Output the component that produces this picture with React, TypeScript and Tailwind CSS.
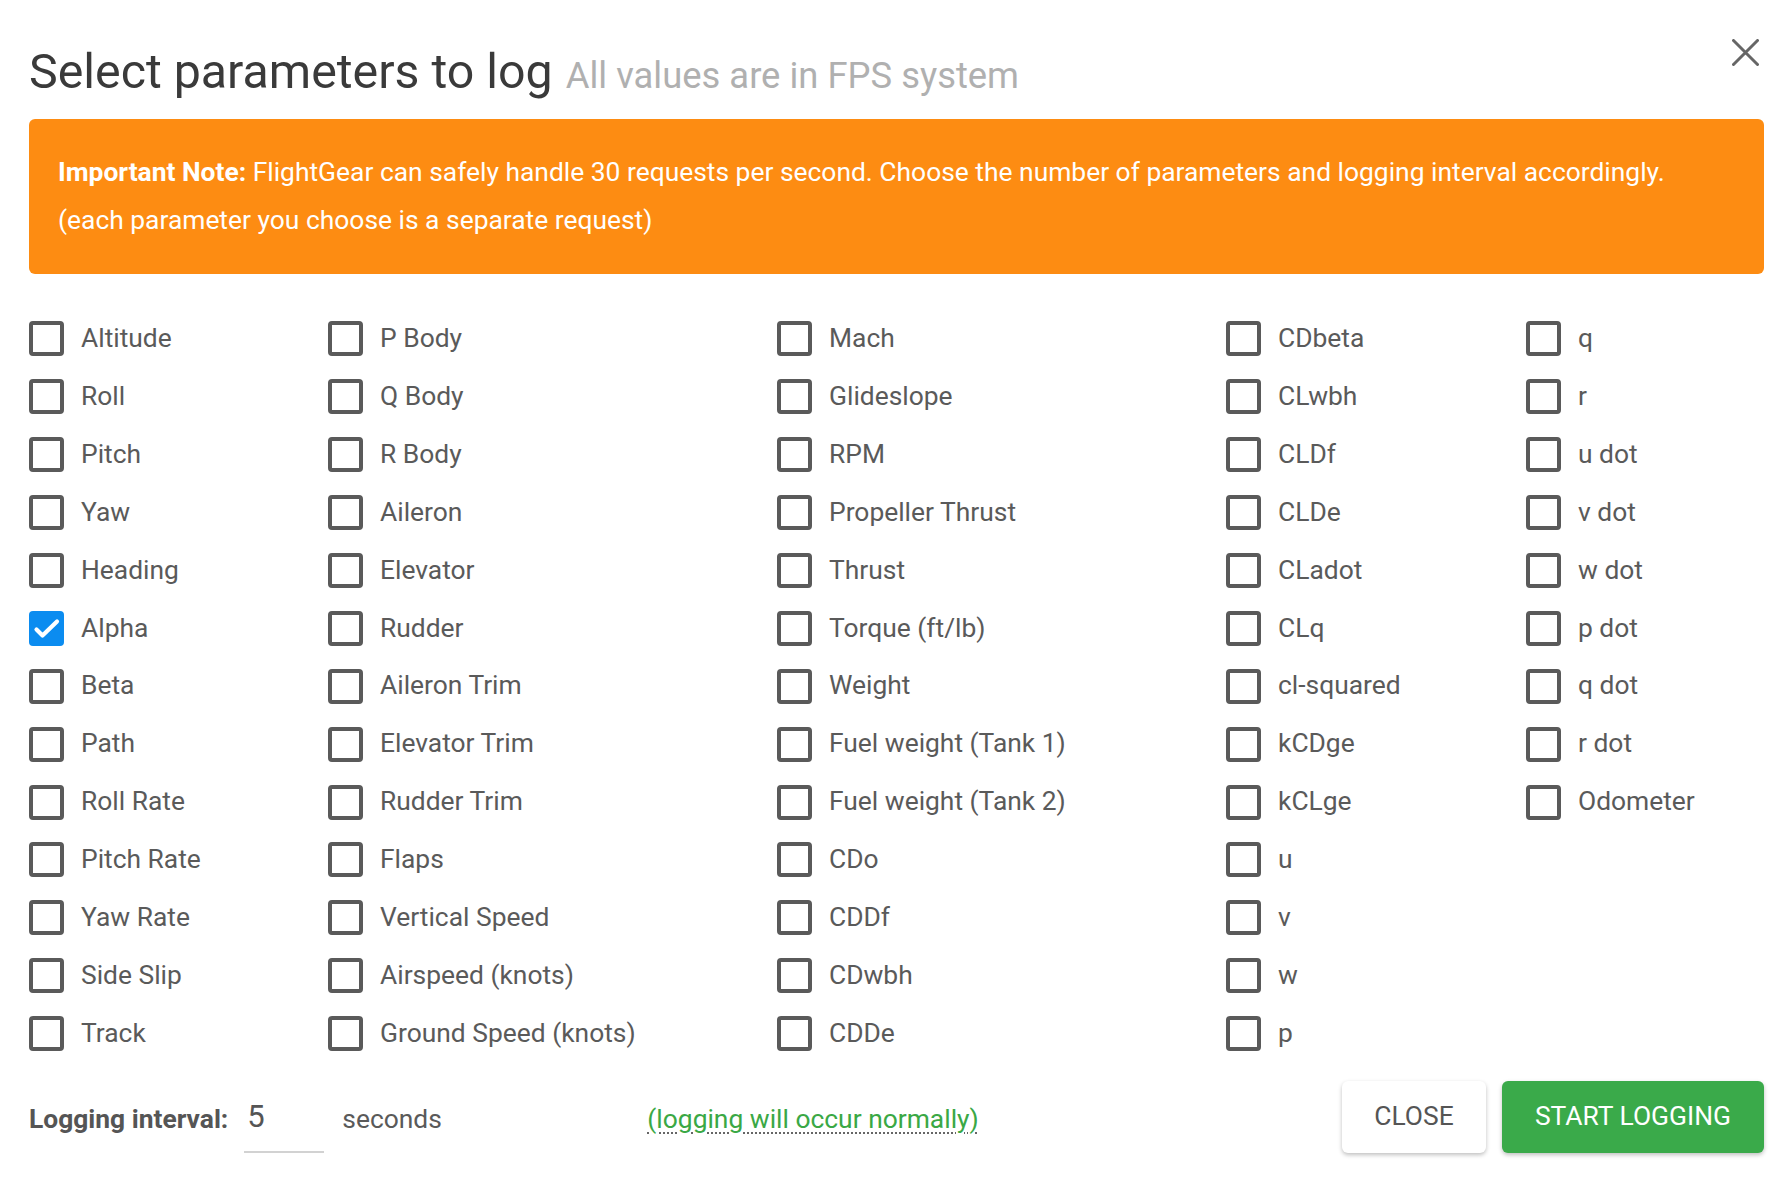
import React from "react";

const columns: string[][] = [
  ["Altitude", "Roll", "Pitch", "Yaw", "Heading", "Alpha", "Beta", "Path", "Roll Rate", "Pitch Rate", "Yaw Rate", "Side Slip", "Track"],
  ["P Body", "Q Body", "R Body", "Aileron", "Elevator", "Rudder", "Aileron Trim", "Elevator Trim", "Rudder Trim", "Flaps", "Vertical Speed", "Airspeed (knots)", "Ground Speed (knots)"],
  ["Mach", "Glideslope", "RPM", "Propeller Thrust", "Thrust", "Torque (ft/lb)", "Weight", "Fuel weight (Tank 1)", "Fuel weight (Tank 2)", "CDo", "CDDf", "CDwbh", "CDDe"],
  ["CDbeta", "CLwbh", "CLDf", "CLDe", "CLadot", "CLq", "cl-squared", "kCDge", "kCLge", "u", "v", "w", "p"],
  ["q", "r", "u dot", "v dot", "w dot", "p dot", "q dot", "r dot", "Odometer"],
];

function Checkbox({ checked }: { checked: boolean }) {
  if (checked) {
    return (
      <div className="w-[35px] h-[35px] rounded-[4px] bg-[#0b8cf0] flex items-center justify-center shrink-0">
        <svg width="35" height="35" viewBox="0 0 35 35">
          <path d="M7.5 18.5 L13.5 24.5 L28 10.5" fill="none" stroke="#ffffff" strokeWidth="4.2" strokeLinecap="round" strokeLinejoin="round" />
        </svg>
      </div>
    );
  }
  return <div className="w-[35px] h-[35px] rounded-[4px] border-[4px] border-[#5a5a5a] bg-white shrink-0" />;
}

export default function App() {
  return (
    <div
      className="relative w-[1792px] h-[1180px] bg-white pl-[29px] pr-[28px]"
      style={{ fontFamily: "Roboto, 'Liberation Sans', Arial, sans-serif" }}
    >
      <button className="absolute top-[39px] right-[33px] w-[27px] h-[27px]" aria-label="close">
        <svg width="27" height="27" viewBox="0 0 27 27">
          <path d="M1.5 1.5 L25.5 25.5 M25.5 1.5 L1.5 25.5" stroke="#666666" strokeWidth="3" strokeLinecap="round" />
        </svg>
      </button>

      <div className="pt-[44px] flex items-baseline leading-[56px]">
        <span className="text-[48.3px] text-[#3a3a3a]">Select parameters to log</span>
        <span className="text-[36.4px] text-[#b0b0b0] ml-[13px]">All values are in FPS system</span>
      </div>

      <div className="mt-[15px] bg-[#fd8c12] rounded-[6px] px-[29px] pt-[29px] pb-[30px] text-white text-[26.4px] leading-[48px]">
        <span className="font-bold">Important Note:</span> FlightGear can safely handle 30 requests per second. Choose the number of parameters and logging interval accordingly.
        <br />
        (each parameter you choose is a separate request)
      </div>

      <div className="mt-[36px] grid grid-cols-[299px_449px_449px_300px_1fr]">
        {columns.map((col, ci) => (
          <div key={ci} className="flex flex-col">
            {col.map((label) => (
              <div key={label} className="h-[57.9px] flex items-center">
                <Checkbox checked={label === "Alpha"} />
                <span className="ml-[17px] text-[26.4px] text-[#5a5a5a]">{label}</span>
              </div>
            ))}
          </div>
        ))}
      </div>

      <div className="mt-[18px] flex items-center h-[72px]">
        <span className="pt-[6px] font-bold text-[26.4px] text-[#555555]">Logging interval:</span>
        <div className="ml-[16px] w-[80px] h-[72px] border-b-2 border-[#d2d2d2] flex items-end pb-[16px] pl-[3px]">
          <span className="text-[31px] leading-[36px] text-[#555555]">5</span>
        </div>
        <span className="pt-[6px] ml-[18px] w-[305px] text-[26.4px] text-[#5a5a5a]">seconds</span>
        <span className="mt-[6px] text-[26.4px] text-[#3aa845] underline decoration-dotted decoration-[#666666] decoration-[2px] underline-offset-[5px]">
          (logging will occur normally)
        </span>
        <div className="ml-auto flex items-center gap-[16px]">
          <button className="w-[144px] h-[72px] bg-white rounded-[6px] shadow-[0_2px_4px_rgba(0,0,0,0.25)] text-[26.4px] text-[#555555] uppercase">
            Close
          </button>
          <button className="w-[262px] h-[72px] bg-[#3aaa4a] rounded-[6px] shadow-[0_2px_4px_rgba(0,0,0,0.25)] text-[26.4px] text-white uppercase">
            Start Logging
          </button>
        </div>
      </div>
    </div>
  );
}
